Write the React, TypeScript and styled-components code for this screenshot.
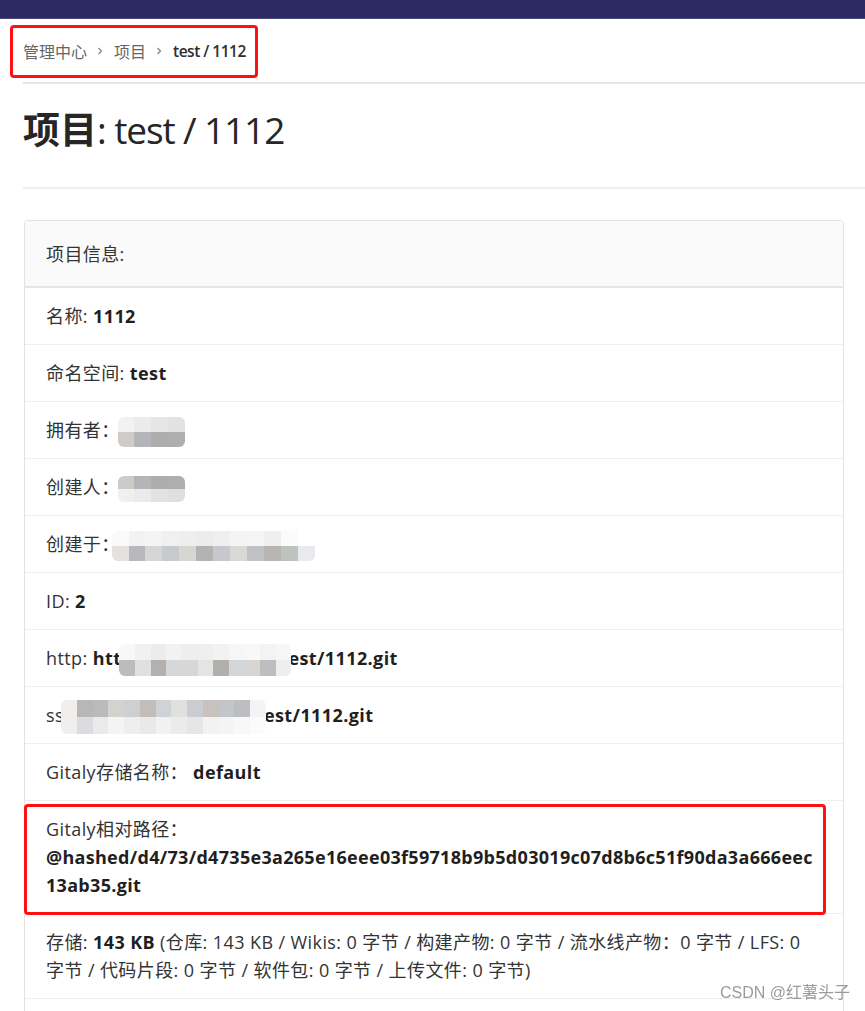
import React from "react";
import styled, { createGlobalStyle } from "styled-components";

const Global = createGlobalStyle`
  html, body { margin: 0; padding: 0; background: #fff; }
  body {
    font-family: "Open Sans", "Noto Sans CJK SC", sans-serif;
    color: #333;
    overflow: hidden;
  }
  *, *::before, *::after { box-sizing: border-box; }
`;

const Page = styled.div`
  position: relative;
  width: 865px;
  height: 1011px;
  overflow: hidden;
`;

const TopBar = styled.div`
  height: 19px;
  background: #2a2961;
  border-bottom: 1px solid #4a4a7e;
`;

const Content = styled.div`
  padding-left: 23px;
`;

const CrumbBar = styled.nav`
  position: relative;
  display: flex;
  align-items: center;
  height: 65px;
  padding-top: 1px;
  border-bottom: 2px solid #e6e6e6;
  font-size: 16px;
`;

const Crumb = styled.span<{ $current?: boolean }>`
  color: ${(p) => (p.$current ? "#2e2e2e" : "#666")};
  font-weight: ${(p) => (p.$current ? 600 : 400)};
  letter-spacing: ${(p) => (p.$current ? "-0.5px" : "0")};
  font-size: ${(p) => (p.$current ? "15.5px" : "16px")};
`;

const Chevron = styled.svg`
  width: 10px;
  height: 10px;
  margin: 0 9px 0 8px;
`;

const Highlight = styled.div`
  position: absolute;
  border: 3px solid #ff1010;
  border-radius: 4px;
  pointer-events: none;
`;

const TitleBar = styled.div`
  height: 105px;
  display: flex;
  align-items: center;
  padding-bottom: 15px;
  border-bottom: 2px solid #f0f0f0;
`;

const Title = styled.h1`
  margin: 0;
  font-size: 37px;
  font-weight: 400;
  color: #262626;
  letter-spacing: -1.1px;
`;

const TitleStrong = styled.span`
  font-weight: 700;
  letter-spacing: 0;
`;

const Panel = styled.div`
  margin: 31px 21px 0 1px;
  border: 1px solid #e3e3e3;
  border-bottom: none;
  border-radius: 4px 4px 0 0;
  font-size: 18px;
  line-height: 28px;
  letter-spacing: 0.4px;
`;

const PanelHeader = styled.div`
  background: #fafafa;
  padding: 19px 21px 18px;
  border-bottom: 2px solid #e6e6e6;
  color: #333;
`;

const Row = styled.div`
  position: relative;
  padding: 14px 21px 14px;
  border-bottom: 1px solid #efefef;
  color: #333;
  min-height: 57px;
`;

const Strong = styled.strong`
  font-weight: 700;
  color: #1f1f1f;
`;

const PathValue = styled.div`
  font-weight: 700;
  color: #1f1f1f;
  letter-spacing: 0.3px;
  word-break: break-all;
`;

const MosaicBox = styled.span<{ $w: number }>`
  display: inline-grid;
  grid-auto-flow: row;
  width: ${(p) => p.$w}px;
  vertical-align: middle;
  margin-top: -12px;
  margin-bottom: -12px;
  filter: blur(0.7px);
  border-radius: 6px;
  overflow: hidden;
`;

const MosaicRow = styled.span<{ $h: number }>`
  display: flex;
  height: ${(p) => p.$h}px;
`;

const Cell = styled.span<{ $c: string }>`
  flex: 1;
  background: ${(p) => p.$c};
`;

const Watermark = styled.div`
  position: absolute;
  right: 15px;
  bottom: 8px;
  font-family: "Liberation Sans", "Noto Sans CJK SC", sans-serif;
  font-size: 16px;
  color: #8a8a8a;
  opacity: 0.85;
`;

function Mosaic({ w, h, rows, ml = 0, mr = 0 }: { w: number; h: number; rows: string[][]; ml?: number; mr?: number }) {
  return (
    <MosaicBox $w={w} style={{ marginLeft: ml, marginRight: mr }}>
      {rows.map((r, i) => (
        <MosaicRow key={i} $h={h}>
          {r.map((c, j) => (
            <Cell key={j} $c={c} />
          ))}
        </MosaicRow>
      ))}
    </MosaicBox>
  );
}

const Chev = () => (
  <Chevron viewBox="0 0 10 10">
    <path d="M3.5 2 L6.5 5 L3.5 8" fill="none" stroke="#888" strokeWidth="1.3" />
  </Chevron>
);

const hash =
  "@hashed/d4/73/d4735e3a265e16eee03f59718b9b5d03019c07d8b6c51f90da3a666eec13ab35.git";

export default function App() {
  return (
    <Page>
      <Global />
      <TopBar />
      <Content>
        <CrumbBar>
          <Crumb>管理中心</Crumb>
          <Chev />
          <Crumb>项目</Crumb>
          <Chev />
          <Crumb $current>test / 1112</Crumb>
          <Highlight style={{ left: -13, top: 6, width: 248, height: 53 }} />
        </CrumbBar>
        <TitleBar>
          <Title>
            <TitleStrong>项目</TitleStrong>: test / 1112
          </Title>
        </TitleBar>
        <Panel>
          <PanelHeader>项目信息:</PanelHeader>
          <Row>
            名称: <Strong>1112</Strong>
          </Row>
          <Row>
            命名空间: <Strong>test</Strong>
          </Row>
          <Row>
            拥有者：
            <Mosaic
              w={67}
              h={15}
              rows={[
                ["#f2f2f2", "#ebebeb", "#e6e6e6", "#e2e2e2"],
                ["#cfcbc8", "#b3b5b8", "#adadad", "#aeaeae"],
              ]}
              ml={-2}
            />
          </Row>
          <Row>
            创建人：
            <Mosaic
              w={67}
              h={13}
              rows={[
                ["#cdcac7", "#b3b5b8", "#adadad", "#aeaeae"],
                ["#f0f0f0", "#ebebeb", "#e2e2e2", "#dfdfdf"],
              ]}
              ml={-2}
            />
          </Row>
          <Row>
            创建于：
            <Mosaic
              w={203}
              h={15}
              rows={[
                ["#fafafa", "#f2f2f2", "#f4f4f4", "#f0f0f0", "#eeeeee", "#ececec", "#eeeff1", "#f4f4f4", "#f5f5f3", "#eeeff1", "#fbfbfb", "#ffffff"],
                ["#e4e2df", "#b9b8bd", "#d8d6d4", "#c6cacc", "#d8d6d3", "#b4b3b3", "#c7c8cd", "#dad9d6", "#c1c2c6", "#b9b5b2", "#bec3c0", "#e9e9ee"],
              ]}
              ml={-8}
            />
          </Row>
          <Row>
            ID: <Strong>2</Strong>
          </Row>
          <Row>
            http: <Strong>htt</Strong>
            <Mosaic
              w={172}
              h={16}
              rows={[
                ["#f8f8f8", "#f1f1f1", "#ececec", "#f2f2f2", "#eeeeee", "#efefef", "#f2f2f2", "#f6f6f6", "#f8f8f8", "#f3f3f3", "#f6f6f6"],
                ["#bdbcbd", "#e0e0e0", "#b3b0ae", "#d5d8da", "#d7d7d7", "#e4e4e4", "#b1b0ac", "#d3d7d9", "#d8d6d3", "#bcbec2", "#eeeeee"],
              ]}
              ml={-2}
              mr={-3}
            />
            <Strong>est/1112.git</Strong>
          </Row>
          <Row>
            ss
            <Mosaic
              w={205}
              h={17}
              rows={[
                ["#f1efee", "#b8b6b7", "#bbbaba", "#d2d2cf", "#cdd0d2", "#c3beba", "#cfd3d6", "#e2e0dc", "#c9ccd0", "#c8c1be", "#c4c5ca", "#bdbec2", "#f4f4f4"],
                ["#f0efee", "#dcdbdd", "#e9eaec", "#f4f4f4", "#eeeeee", "#e9e9eb", "#f1f1f1", "#ebebeb", "#e6e6e6", "#f2f2f2", "#f4f4f4", "#f8f8f8", "#fbfbfb"],
              ]}
              ml={-3}
              mr={-2}
            />
            <Strong>est/1112.git</Strong>
          </Row>
          <Row>
            Gitaly存储名称：&nbsp;<Strong>default</Strong>
          </Row>
          <Row>
            Gitaly相对路径：
            <PathValue>{hash}</PathValue>
            <Highlight style={{ left: -1, top: 3, right: 17, bottom: -2 }} />
          </Row>
          <Row>
            存储: <Strong>143 KB</Strong> (仓库: 143 KB / Wikis: 0 字节 / 构建产物: 0 字节 / 流水线产物：0 字节 / LFS: 0 字节 / 代码片段: 0 字节 / 软件包: 0 字节 / 上传文件: 0 字节)
          </Row>
          <Row />
        </Panel>
      </Content>
      <Watermark>CSDN @红薯头子</Watermark>
    </Page>
  );
}
